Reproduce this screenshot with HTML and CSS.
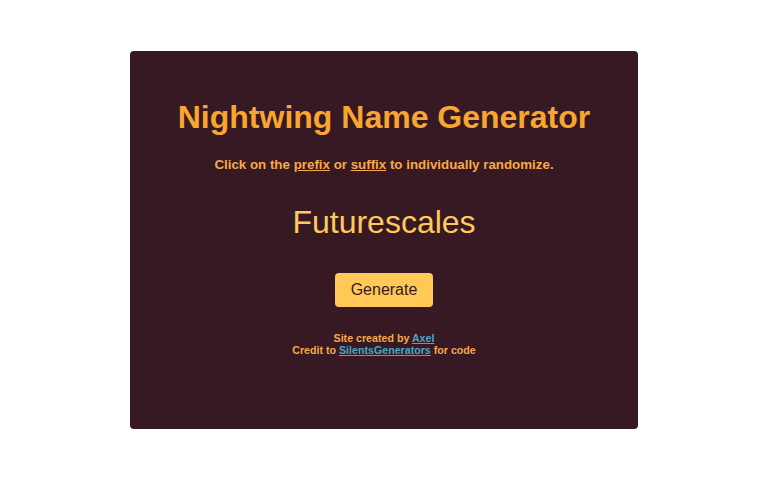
FILE: index.html
```html
<!DOCTYPE html>
<html>
<head>
<meta charset="utf-8">
<link rel="stylesheet" href="styles.css">
</head>
<body>
<div class="page">
  <div class="card">
    <h1 class="title">Nightwing Name Generator</h1>
    <p class="hint">Click on the <a class="part" href="#">prefix</a> or <a class="part" href="#">suffix</a> to individually randomize.</p>
    <div class="name">Futurescales</div>
    <button class="gen">Generate</button>
    <div class="credits">
      <div>Site created by <a class="link" href="#">Axel</a></div>
      <div>Credit to <a class="link" href="#">SilentsGenerators</a> for code</div>
    </div>
  </div>
</div>
</body>
</html>
```
FILE: styles.css
```css
html, body { margin: 0; padding: 0; background: #fff; }
body { font-family: "Liberation Sans", Arial, sans-serif; }
.page { display: flex; justify-content: center; padding-top: 51px; }
.card {
  width: 508px;
  height: 378px;
  box-sizing: border-box;
  background: #371923;
  border-radius: 4px;
  display: flex;
  flex-direction: column;
  align-items: center;
  padding-top: 97px;
}
.title {
  margin: 0;
  font-size: 32px;
  line-height: 36px;
  font-weight: bold;
  color: #f9a630;
  margin-top: -49px;
}
.hint {
  margin: 22px 0 0;
  font-size: 13.33px;
  line-height: 16px;
  font-weight: bold;
  color: #f6a94a;
}
.part { color: #f6a94a; text-decoration: underline; }
.name {
  margin-top: 31px;
  font-size: 32px;
  line-height: 36px;
  color: #ffc95c;
}
.gen {
  margin-top: 33px;
  width: 98px;
  height: 34px;
  border: none;
  border-radius: 4px;
  background: #ffc857;
  color: #371923;
  font-family: "Liberation Sans", Arial, sans-serif;
  font-size: 16px;
  padding: 0;
}
.credits {
  margin-top: 25px;
  font-size: 10.67px;
  line-height: 12px;
  font-weight: bold;
  color: #f6a94a;
  text-align: center;
}
.link { color: #45a9c7; text-decoration: underline; }
```
